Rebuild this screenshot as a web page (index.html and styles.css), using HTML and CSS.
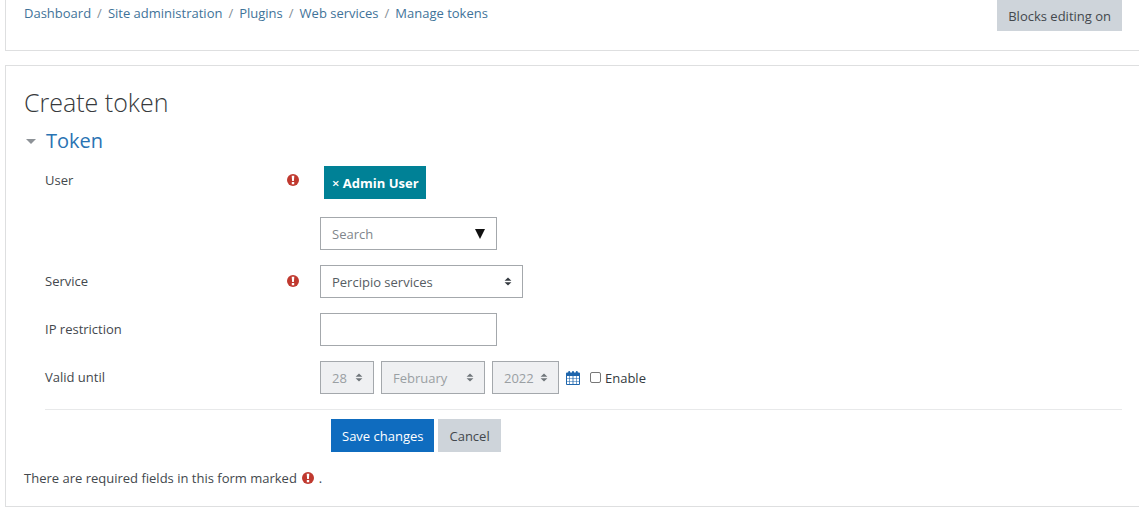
FILE: index.html
```html
<!DOCTYPE html>
<html lang="en">
<head>
<meta charset="utf-8">
<meta name="viewport" content="width=device-width, initial-scale=1">
<title>Manage tokens</title>
<link rel="stylesheet" href="styles.css">
</head>
<body>
<svg class="sprite" aria-hidden="true">
  <symbol id="required" viewBox="0 0 12 12"><circle cx="6" cy="6" r="6" fill="#c0392f"/><path d="M4.700 1.800h2.600l-.4 5.200H5.100zM4.800 8h2.400v2.200H4.800z" fill="#fff"/></symbol>
  <symbol id="updown" viewBox="0 0 8 10"><path d="M4 0.500 7.800 4.300H.2zM4 9.500 7.800 5.700H.2z" fill="currentColor"/></symbol>
  <symbol id="down" viewBox="0 0 10 10"><path d="M0 0h10L5 10z" fill="currentColor"/></symbol>
</svg>

<header class="card page-header">
  <nav aria-label="Breadcrumb">
    <ol class="breadcrumb">
      <li><a href="#">Dashboard</a></li>
      <li><a href="#">Site administration</a></li>
      <li><a href="#">Plugins</a></li>
      <li><a href="#">Web services</a></li>
      <li><a href="#">Manage tokens</a></li>
    </ol>
  </nav>
  <button class="btn btn-secondary" type="button">Blocks editing on</button>
</header>

<main class="card page-main">
  <h1 class="title">Create token</h1>
  <form>
    <h2 class="section-title">
      <a href="#"><svg class="caret" viewBox="0 0 10 5" aria-hidden="true"><path d="M0 0h10L5 5z" fill="#8d9297"/></svg>Token</a>
    </h2>
    <div class="fields">
      <div class="row row-user">
        <div class="label"><label for="user">User</label><svg class="required" role="img" aria-label="Required"><use href="#required"/></svg></div>
        <div class="stack">
          <button class="tag" type="button"><span class="tag-x">×</span> Admin User</button>
          <div class="control medium">
            <input class="field" id="user" type="text" placeholder="Search">
            <svg class="icon-down" aria-hidden="true"><use href="#down"/></svg>
          </div>
        </div>
      </div>
      <div class="row">
        <div class="label"><label for="service">Service</label><svg class="required" role="img" aria-label="Required"><use href="#required"/></svg></div>
        <div class="control wide">
          <select class="field" id="service"><option>Percipio services</option></select>
          <svg class="icon-updown" aria-hidden="true"><use href="#updown"/></svg>
        </div>
      </div>
      <div class="row">
        <div class="label"><label for="ip">IP restriction</label></div>
        <div class="control medium"><input class="field" id="ip" type="text"></div>
      </div>
      <div class="row">
        <div class="label"><label for="day">Valid until</label></div>
        <div class="date">
          <div class="control day">
            <select class="field" id="day" disabled><option>28</option></select>
            <svg class="icon-updown" aria-hidden="true"><use href="#updown"/></svg>
          </div>
          <div class="control month">
            <select class="field" aria-label="Month" disabled><option>February</option></select>
            <svg class="icon-updown" aria-hidden="true"><use href="#updown"/></svg>
          </div>
          <div class="control year">
            <select class="field" aria-label="Year" disabled><option>2022</option></select>
            <svg class="icon-updown" aria-hidden="true"><use href="#updown"/></svg>
          </div>
          <a class="calendar" href="#" aria-label="Calendar"><svg viewBox="0 0 14 14"><path fill="#1f66ac" fill-rule="evenodd" d="M1 1.500h1.200V1q0-1 1-1t1 1v.5h1.800V1q0-1 1-1t1 1v.5h1.800V1q0-1 1-1t1 1v.5H13q1 0 1 1V13q0 1-1 1H1q-1 0-1-1V2.500q0-1 1-1zM1 5v2.400h2.400V5zm3 0v2.400h2.600V5zm3.400 0v2.400H10V5zm3.200 0v2.400H13V5zM1 8v2.200h2.400V8zm3 0v2.200h2.600V8zm3.400 0v2.200H10V8zm3.200 0v2.200H13V8zM1 10.800V13h2.400v-2.200zm3 0V13h2.600v-2.200zm3.400 0V13H10v-2.200zm3.200 0V13H13v-2.200z"/></svg></a>
          <label class="enable"><input type="checkbox">Enable</label>
        </div>
      </div>
      <div class="actions">
        <button class="btn btn-primary" type="submit">Save changes</button>
        <button class="btn btn-secondary" type="button">Cancel</button>
      </div>
    </div>
    <p class="note">There are required fields in this form marked <svg class="required" role="img" aria-label="Required"><use href="#required"/></svg> <span>.</span></p>
  </form>
</main>
</body>
</html>
```
FILE: styles.css
```css
* { box-sizing: border-box; }

body {
  margin: 0;
  padding-left: 5px;
  background: #fff;
  color: #43484d;
  font: 13px/20px "Open Sans", "Noto Sans", sans-serif;
}

a { color: #3f7399; text-decoration: none; }

.sprite { position: absolute; width: 0; height: 0; }

.card {
  border: 1px solid #dedfe0;
  border-right: 0;
  padding: 0 17px 0 18px;
}

.page-header {
  display: flex;
  justify-content: space-between;
  align-items: flex-start;
  border-top: 0;
  padding-bottom: 19px;
  margin-bottom: 14px;
}

.breadcrumb {
  display: flex;
  flex-wrap: wrap;
  list-style: none;
  margin: 0;
  padding: 3px 0 0;
}

.breadcrumb li + li::before {
  content: "/";
  padding: 0 6px;
  color: #868e96;
}

.btn {
  height: 33px;
  padding: 0 11px;
  border: 0;
  font: inherit;
}

.page-header .btn { height: 31px; }
.btn-secondary { background: #ced4da; color: #43484d; }
.btn-primary { background: #0f6cbf; color: #fff; }

.page-main { padding-top: 19px; }

.title {
  margin: 0;
  font-size: 25px;
  line-height: 34px;
  font-weight: 300;
  color: #373a3c;
}

.section-title {
  margin: 5px 0 8px;
  font-size: 20px;
  line-height: 34px;
  font-weight: 400;
}

.section-title a { display: flex; align-items: center; color: #2a73b3; }
.caret { width: 10px; height: 5px; margin: 0 10px 0 2px; }

.fields { padding-left: 21px; }

.row {
  display: grid;
  grid-template-columns: 275px 1fr;
  align-items: start;
  margin-bottom: 15px;
}

.label {
  display: flex;
  justify-content: space-between;
  align-items: center;
  padding: 6px 21px 0 0;
}

.row-user .label { padding-top: 4px; }
.required { width: 12px; height: 12px; }

.stack { display: grid; gap: 18px; justify-items: start; }

.tag {
  height: 33px;
  margin-left: 4px;
  padding: 0 7px 0 8px;
  border: 0;
  background: #008196;
  color: #fff;
  font: inherit;
  font-weight: 700;
}

.tag-x { font-weight: 600; }

.control { position: relative; }
.medium { width: 177px; }
.wide { width: 203px; }
.day { width: 54px; }
.month { width: 104px; }
.year { width: 67px; }

.field {
  display: block;
  width: 100%;
  height: 33px;
  padding: 0 11px;
  border: 1px solid #a4a8ac;
  border-radius: 0;
  background: #fff;
  color: #565d63;
  font: inherit;
  appearance: none;
}

.field::placeholder { color: #7f868c; opacity: 1; }
.field:disabled { background: #eff0f2; color: #9a9fa3; opacity: 1; }

.icon-down, .icon-updown {
  position: absolute;
  top: 12px;
  pointer-events: none;
}

.icon-down { right: 12px; width: 10px; height: 10px; color: #111; }
.icon-updown { right: 11px; width: 8px; height: 9px; color: #343a40; }
.date .icon-updown { color: #70767b; }

.date { display: flex; align-items: center; gap: 7px; }
.calendar { display: flex; margin-right: 3px; }
.calendar svg { width: 14px; height: 14px; }

.enable { display: flex; align-items: center; gap: 4px; color: #343a40; }

.enable input {
  appearance: none;
  width: 11px;
  height: 11px;
  margin: 0;
  border: 1px solid #777;
  border-radius: 2px;
  background: #fff;
}

.enable input:checked { background: #0f6cbf; }

.actions {
  display: flex;
  gap: 4px;
  border-top: 1px solid #e8e9ea;
  padding: 9px 0 0 286px;
}

.note {
  display: flex;
  align-items: center;
  gap: 5px;
  margin: 16px 0 18px;
}
```
